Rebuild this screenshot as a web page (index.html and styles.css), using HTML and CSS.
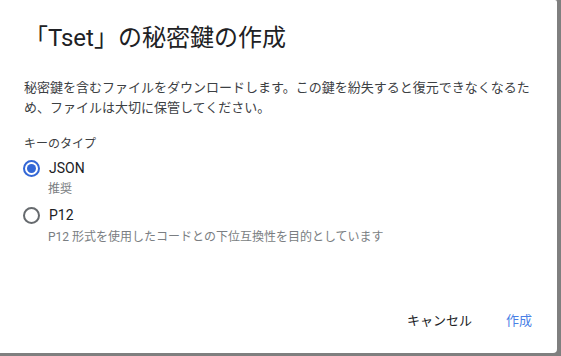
FILE: index.html
```html
<!DOCTYPE html>
<html lang="ja">
<head>
    <meta charset="UTF-8">
    <meta name="viewport" content="width=device-width, initial-scale=1.0">
    <title>秘密鍵の作成</title>
    <link rel="stylesheet" href="styles.css">
</head>
<body>
    <div class="dialog">
        <h1 class="dialog-title">「Tset」の秘密鍵の作成</h1>
        <p class="dialog-text">秘密鍵を含むファイルをダウンロードします。この鍵を紛失すると復元できなくなるため、ファイルは大切に保管してください。</p>

        <div class="field">
            <div class="field-label">キーのタイプ</div>
            <label class="option">
                <input type="radio" name="keytype" checked>
                <span class="option-name">JSON</span>
            </label>
            <div class="option-hint">推奨</div>
            <label class="option">
                <input type="radio" name="keytype">
                <span class="option-name">P12</span>
            </label>
            <div class="option-hint">P12 形式を使用したコードとの下位互換性を目的としています</div>
        </div>

        <div class="actions">
            <button class="btn">キャンセル</button>
            <button class="btn btn-primary">作成</button>
        </div>
    </div>
</body>
</html>
```

FILE: styles.css
```css
body {
    margin: 0;
    padding: 0;
    background-color: #7f7f7f;
    font-family: Roboto, "Noto Sans CJK JP", sans-serif;
    color: #3c4043;
}

.dialog {
    width: 557px;
    height: 353px;
    box-sizing: border-box;
    background-color: white;
    border-radius: 0 2px 4px 0;
    padding: 22px 24px 16px 24px;
    display: flex;
    flex-direction: column;
}

.dialog-title {
    margin: 0;
    font-size: 24px;
    font-weight: 400;
    line-height: 32px;
    color: #202124;
}

.dialog-text {
    margin: 24px 0 0 0;
    font-size: 13px;
    line-height: 20px;
}

.field {
    margin-top: 18px;
}

.field-label {
    font-size: 12px;
    line-height: 16px;
}

.option {
    display: flex;
    align-items: center;
    gap: 9px;
    height: 24px;
    margin-top: 4px;
    cursor: pointer;
}

.option input {
    appearance: none;
    margin: 0 0 0 -1px;
    width: 17px;
    height: 17px;
    border: 2px solid #666a6e;
    border-radius: 50%;
    box-sizing: border-box;
    display: grid;
    place-items: center;
}

.option input:checked {
    border-color: #3367d6;
}

.option input:checked::after {
    content: "";
    width: 9px;
    height: 9px;
    border-radius: 50%;
    background-color: #3367d6;
}

.option-name {
    font-size: 14px;
    font-weight: 400;
    color: #202124;
}

.option-hint {
    font-size: 12px;
    line-height: 20px;
    margin: -1px 0 3px 24px;
    color: #7a7e82;
}

.option-hint:last-child {
    margin: 0 0 0 24px;
}

.actions {
    margin-top: auto;
    display: flex;
    justify-content: flex-end;
    gap: 2px;
    margin-right: -15px;
}

.btn {
    height: 36px;
    padding: 0 16px;
    border: none;
    background: none;
    font-family: inherit;
    font-size: 13px;
    font-weight: 400;
    color: #202124;
    cursor: pointer;
}

.btn-primary {
    color: #4a7fe6;
}
```
